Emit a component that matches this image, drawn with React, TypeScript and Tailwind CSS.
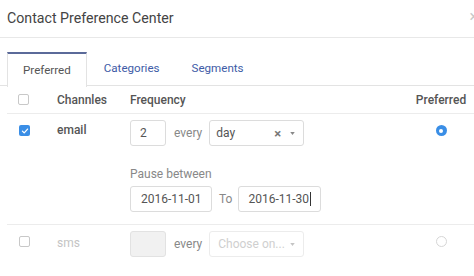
import React from "react";

function Checkbox({ checked }: { checked?: boolean }) {
  if (checked) {
    return (
      <span className="flex h-[11px] w-[11px] items-center justify-center rounded-[2px] bg-[#3a8ee6]">
        <svg viewBox="0 0 10 10" className="h-[8px] w-[8px]">
          <path d="M1.8 5.2 L4 7.3 L8.2 2.6" fill="none" stroke="#fff" strokeWidth="1.6" strokeLinecap="round" strokeLinejoin="round" />
        </svg>
      </span>
    );
  }
  return <span className="block h-[11px] w-[11px] rounded-[2px] border border-[#c8c8c8] bg-white" />;
}

function Radio({ checked }: { checked?: boolean }) {
  if (checked) {
    return (
      <span className="flex h-[11px] w-[11px] items-center justify-center rounded-full bg-[#3a8ee6]">
        <span className="h-[4px] w-[4px] rounded-full bg-white" />
      </span>
    );
  }
  return <span className="block h-[11px] w-[11px] rounded-full border border-[#d6d6d6] bg-white" />;
}

function Caret({ light }: { light?: boolean }) {
  return (
    <svg viewBox="0 0 6 4" className="h-[3px] w-[5px]">
      <path d="M0 0 H6 L3 4 Z" fill={light ? "#c4c4c4" : "#888"} />
    </svg>
  );
}

export default function App() {
  return (
    <div className="h-[276px] w-[474px] overflow-hidden bg-white text-[12px] text-[#555]" style={{ fontFamily: 'Roboto, "Liberation Sans", sans-serif' }}>
      {/* Modal header */}
      <div className="relative flex h-[38px] items-center border-b border-[#e8e8e8] pl-[7px]">
        <h1 className="text-[14.2px] font-normal text-[#444]">Contact Preference Center</h1>
        <span className="absolute right-[-4px] top-[5px] text-[16px] text-[#c8c8c8]">×</span>
      </div>

      {/* Tabs */}
      <div className="mt-[14px] flex h-[34px] border-b border-[#e3e3e3] pl-[7px] text-[11.6px]">
        <div className="mb-[-1px] flex h-[35px] items-center border-x border-t-2 border-x-[#e3e3e3] border-t-[#5b6a99] bg-white px-[15px] text-[#555]">
          Preferred
        </div>
        <div className="ml-[2px] flex items-center px-[15px] text-[#3e5ba6]">Categories</div>
        <div className="ml-[2px] flex items-center px-[15px] text-[#3e5ba6]">Segments</div>
      </div>

      {/* Table */}
      <div className="ml-[7px]">
        <div className="grid h-[28px] grid-cols-[50px_73px_1fr_66px] items-center border-b border-[#ececec] font-medium text-[#555]">
          <div className="pl-[11px]">
            <Checkbox />
          </div>
          <div>Channles</div>
          <div>Frequency</div>
          <div className="text-center">Preferred</div>
        </div>

        {/* email row */}
        <div className="grid grid-cols-[50px_73px_1fr_66px] border-b border-[#ececec] pb-[12px] pt-[6px]">
          <div className="pl-[12px] pt-[5px]">
            <Checkbox checked />
          </div>
          <div className="pt-[1px] font-medium text-[#555]">email</div>
          <div>
            <div className="flex items-center">
              <div className="flex h-[26px] w-[36px] items-center rounded-[3px] border border-[#dcdcdc] pl-[9px] text-[#555]">2</div>
              <span className="ml-[8px] text-[#888]">every</span>
              <div className="ml-[7px] flex h-[26px] w-[95px] items-center rounded-[3px] border border-[#dcdcdc] pl-[6px] pr-[8px] text-[#555]">
                <span className="flex-1">day</span>
                <span className="mr-[9px] text-[13px] font-bold leading-none text-[#777]">×</span>
                <Caret />
              </div>
            </div>
            <div className="mt-[19px] text-[#888]">Pause between</div>
            <div className="mt-[3px] flex items-center">
              <div className="flex h-[26px] w-[82px] items-center rounded-[3px] border border-[#dcdcdc] pl-[10px] text-[#555]">2016-11-01</div>
              <span className="ml-[7px] text-[#888]">To</span>
              <div className="ml-[6px] flex h-[26px] w-[83px] items-center rounded-[3px] border border-[#dcdcdc] pl-[9px] text-[#555]">
                2016-11-30<span className="ml-[1px] inline-block h-[14px] w-px bg-[#333]" />
              </div>
            </div>
          </div>
          <div className="flex justify-center pt-[5px]">
            <Radio checked />
          </div>
        </div>

        {/* sms row */}
        <div className="grid grid-cols-[50px_73px_1fr_66px] pt-[6px]">
          <div className="pl-[12px] pt-[5px]">
            <Checkbox />
          </div>
          <div className="pt-[3px] text-[#c4c4c4]">sms</div>
          <div className="flex items-center">
            <div className="h-[26px] w-[36px] rounded-[3px] border border-[#e2e2e2] bg-[#f1f1f1]" />
            <span className="ml-[8px] text-[#888]">every</span>
            <div className="ml-[7px] flex h-[26px] w-[95px] items-center rounded-[3px] border border-[#ececec] pl-[8px] pr-[8px] text-[#cfcfcf]">
              <span className="flex-1">Choose on...</span>
              <Caret light />
            </div>
          </div>
          <div className="flex justify-center pt-[5px]">
            <Radio />
          </div>
        </div>
      </div>
    </div>
  );
}
